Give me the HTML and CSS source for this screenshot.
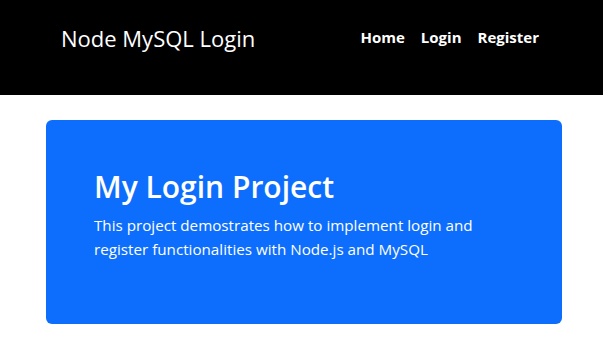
FILE: index.html
```html
<!DOCTYPE html>
<html lang="en">
<head>
<meta charset="utf-8">
<title>Node MySQL Login</title>
<link rel="stylesheet" href="styles.css">
</head>
<body>
<header class="navbar">
  <a class="brand" href="#">Node MySQL Login</a>
  <nav class="nav">
    <a class="nav-link" href="#">Home</a>
    <a class="nav-link" href="#">Login</a>
    <a class="nav-link" href="#">Register</a>
  </nav>
</header>
<main class="main">
  <section class="hero">
    <h1 class="hero-title">My Login Project</h1>
    <p class="hero-text">This project demostrates how to implement login and register functionalities with Node.js and MySQL</p>
  </section>
</main>
</body>
</html>
```
FILE: styles.css
```css
* { box-sizing: border-box; }
body {
  margin: 0;
  font-family: "Open Sans", "Noto Sans", sans-serif;
  color: #212529;
  background: #fff;
}
a { text-decoration: none; }
.navbar {
  background: #000;
  height: 95px;
  display: flex;
  align-items: center;
  justify-content: space-between;
  padding: 0 56px 0 61px;
}
.brand {
  color: #fff;
  font-size: 22px;
  font-weight: 500;
  line-height: 30px;
  margin-top: -19px;
}
.nav {
  display: flex;
  margin-top: -21px;
}
.nav-link {
  color: #fff;
  font-weight: 700;
  font-size: 15px;
  padding: 0 8px;
}
.main {
  padding: 25px 41px 0 46px;
}
.hero {
  background: #0d6efd;
  border-radius: 6px;
  padding: 48px 48px 47px;
  color: #fff;
}
.hero-title {
  margin: 0 0 8px;
  font-size: 30px;
  font-weight: 600;
  line-height: 37px;
}
.hero-text {
  margin: 0 0 16px;
  font-size: 15.2px;
  line-height: 24px;
  max-width: 400px;
}
```
